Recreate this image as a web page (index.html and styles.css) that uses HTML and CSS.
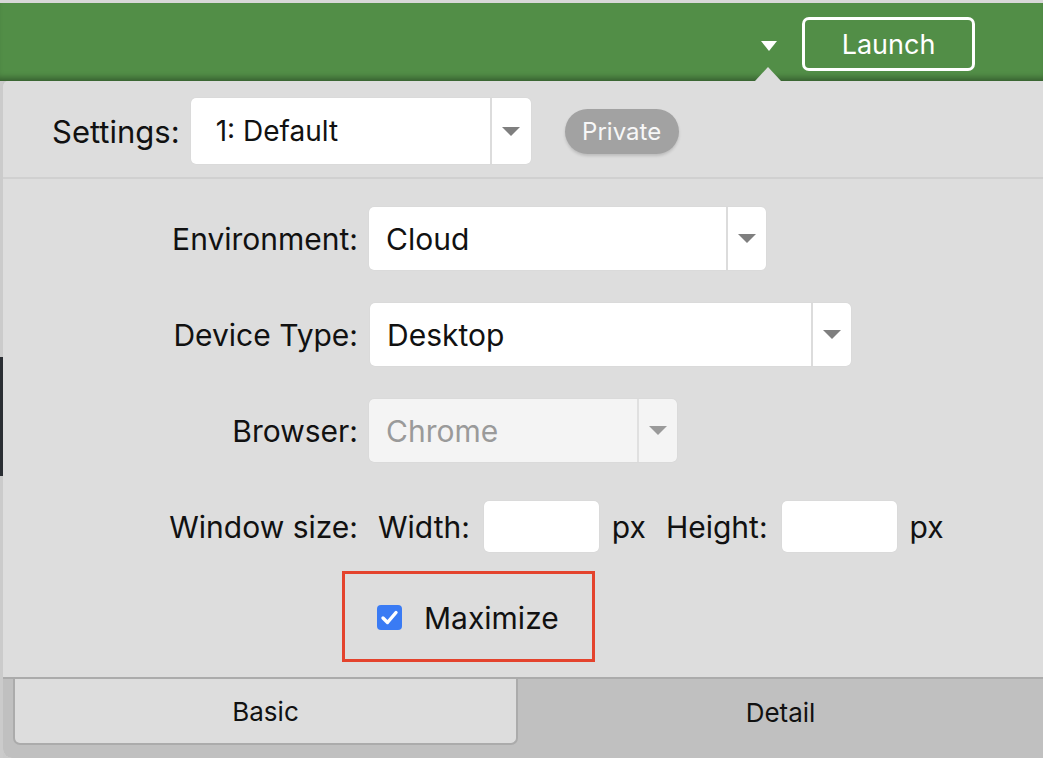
FILE: index.html
```html
<!DOCTYPE html>
<html lang="en">
<head>
<meta charset="utf-8">
<title>Launch settings</title>
<link rel="stylesheet" href="styles.css">
</head>
<body>
<div class="topstrip"></div>
<header class="bar">
  <span class="bar-caret"></span>
  <button class="launch">Launch</button>
</header>
<div class="main">
  <div class="edge"><div class="edge-dark"></div></div>
  <section class="panel">
    <div class="settings-row">
      <span class="settings-label">Settings:</span>
      <div class="select settings-select">
        <span class="value">1: Default</span>
        <span class="caret"><i class="tri"></i></span>
      </div>
      <span class="pill">Private</span>
    </div>
    <div class="form">
      <div class="row r1">
        <span class="label">Environment:</span>
        <div class="select env-select">
          <span class="value">Cloud</span>
          <span class="caret"><i class="tri"></i></span>
        </div>
      </div>
      <div class="row r2">
        <span class="label">Device Type:</span>
        <div class="select device-select">
          <span class="value">Desktop</span>
          <span class="caret"><i class="tri"></i></span>
        </div>
      </div>
      <div class="row r3">
        <span class="label">Browser:</span>
        <div class="select browser-select disabled">
          <span class="value">Chrome</span>
          <span class="caret"><i class="tri"></i></span>
        </div>
      </div>
      <div class="row r4">
        <span class="label">Window size:</span>
        <span class="sub">Width:</span>
        <span class="input"></span>
        <span class="unit">px</span>
        <span class="sub">Height:</span>
        <span class="input"></span>
        <span class="unit">px</span>
      </div>
      <div class="max-wrap">
        <div class="max-box">
          <span class="check">
            <svg viewBox="0 0 25 25" width="25" height="25"><path d="M6 13 L10.5 17.5 L19 7.5" fill="none" stroke="#fff" stroke-width="3.4" stroke-linecap="round" stroke-linejoin="round"/></svg>
          </span>
          <span class="max-label">Maximize</span>
        </div>
      </div>
    </div>
    <div class="tabs">
      <div class="tab active">Basic</div>
      <div class="tab">Detail</div>
    </div>
  </section>
</div>
</body>
</html>
```
FILE: styles.css
```css
* { box-sizing: border-box; }
html, body { margin: 0; padding: 0; }
body {
  width: 1043px;
  height: 758px;
  overflow: hidden;
  background: #c9c9c9;
  font-family: Inter, "Noto Sans", "Liberation Sans", sans-serif;
  color: #111;
}
.topstrip { height: 3px; background: #d8d8d8; }
.bar {
  height: 78px;
  background: #528e47;
  box-shadow: inset 0 -7px 6px -4px rgba(0,0,0,0.35);
  display: flex;
  justify-content: flex-end;
  align-items: center;
  padding-right: 68px;
  gap: 25px;
}
.bar-caret {
  width: 0; height: 0;
  border-left: 8.5px solid transparent;
  border-right: 8.5px solid transparent;
  border-top: 10px solid #fff;
  margin-top: 8px;
}
.launch {
  width: 173px;
  height: 54px;
  margin-top: 4px;
  background: transparent;
  border: 3px solid #fff;
  border-radius: 7px;
  color: #fff;
  font-family: inherit;
  font-size: 27px;
  padding: 0;
}
.main { display: flex; height: 677px; }
.edge { width: 3px; background: #cbcbcb; padding-top: 276px; }
.edge-dark { height: 119px; background: #2a2e33; }
.panel {
  position: relative;
  flex: 1;
  background: #dddddd;
  border-radius: 5px 0 0 9px;
  display: flex;
  flex-direction: column;
}
.panel::before {
  content: "";
  position: absolute;
  top: -14px;
  left: 752px;
  border-left: 13px solid transparent;
  border-right: 13px solid transparent;
  border-bottom: 14px solid #dddddd;
}
.settings-row {
  display: flex;
  align-items: center;
  padding: 17px 0 13px 49px;
  border-bottom: 2px solid #d0d0d0;
}
.settings-label { font-size: 31px; margin-right: 11px; }
.select {
  display: flex;
  background: #fff;
  border-radius: 5px;
  box-shadow: 0 0 1px rgba(0,0,0,0.12);
  height: 63px;
  align-items: stretch;
}
.select .value {
  flex: 1;
  display: flex;
  align-items: center;
  padding-left: 17px;
  font-size: 30px;
}
.select .caret {
  width: 40px;
  border-left: 2px solid #dcdcdc;
  display: flex;
  align-items: center;
  justify-content: center;
}
.tri {
  width: 0; height: 0;
  border-left: 9px solid transparent;
  border-right: 9px solid transparent;
  border-top: 9px solid #7f7f7f;
}
.settings-select { width: 340px; height: 66px; }
.settings-select .value { padding-left: 25px; font-size: 28px; }
.settings-select .caret { width: 41px; }
.pill {
  margin-left: 34px;
  width: 114px;
  height: 45px;
  border-radius: 23px;
  background: #a2a2a2;
  color: #f7f7f7;
  font-size: 24px;
  display: flex;
  align-items: center;
  justify-content: center;
  box-shadow: 0 2px 3px rgba(0,0,0,0.15);
}
.form { display: flex; flex-direction: column; flex: 1; }
.row { display: flex; align-items: center; }
.row .label {
  width: 355px;
  text-align: right;
  font-size: 30px;
  margin-right: 11px;
}
.r1 { margin-top: 28px; }
.r2, .r3 { margin-top: 33px; }
.env-select { width: 397px; }
.device-select { width: 481px; margin-left: 1px; }
.browser-select { width: 308px; }
.disabled { background: #f4f4f4; }
.disabled .value { color: #9a9a9a; }
.disabled .caret { border-left-color: #e0e0e0; }
.disabled .tri { border-top-color: #9a9a9a; }
.r4 { margin-top: 39px; height: 51px; }
.r4 .label { margin-right: 20px; }
.sub, .unit { font-size: 30px; }
.input {
  width: 115px;
  height: 51px;
  background: #fff;
  border-radius: 5px;
  box-shadow: 0 0 1px rgba(0,0,0,0.12);
  margin: 0 13px 0 14px;
}
.unit { margin-right: 20px; }
.max-wrap { padding-left: 339px; margin-top: 19px; }
.max-box {
  width: 253px;
  height: 91px;
  border: 3px solid #e4432d;
  display: flex;
  align-items: center;
  padding-left: 32px;
  padding-top: 2px;
}
.check {
  width: 25px;
  height: 25px;
  border-radius: 4px;
  background: #3a7bf4;
  display: block;
}
.check svg { display: block; }
.max-label { font-size: 30px; margin-left: 22px; }
.tabs {
  margin-top: 15px;
  height: 81px;
  background: #c0c0c0;
  border-top: 2px solid #ababab;
  border-bottom-left-radius: 9px;
  display: flex;
  align-items: flex-start;
  padding-left: 10px;
}
.tab {
  height: 66px;
  display: flex;
  align-items: center;
  justify-content: center;
  font-size: 26px;
  flex: 1;
}
.tab.active {
  flex: 0 0 505px;
  background: #dddddd;
  border: 2px solid #ababab;
  border-top: none;
  border-radius: 0 0 7px 7px;
}
```
